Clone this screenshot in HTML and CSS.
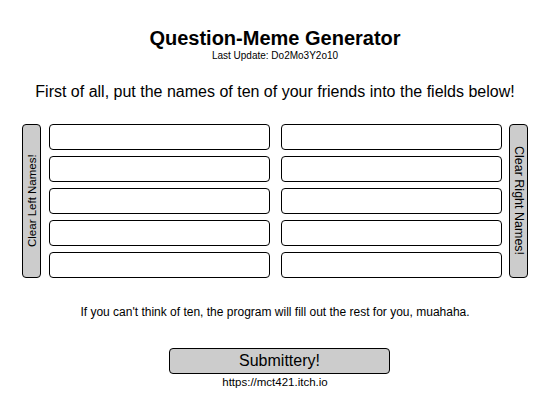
FILE: index.html
```html
<!DOCTYPE html>
<html lang="en">
  <head>
    <meta charset="UTF-8" />
    <meta name="viewport" content="width=device-width, initial-scale=1.0" />
    <title>Question-Meme Generator</title>
    <link rel="stylesheet" href="styles.css">
  </head>
  <body>
    <div class="page">
      <h1>Question-Meme Generator</h1>
      <div class="update">Last Update: Do2Mo3Y2o10</div>
      <p class="intro">First of all, put the names of ten of your friends into the fields below!</p>

      <div class="names">
        <button class="clear-btn clear-left" id="clear-left">Clear Left Names!</button>
        <div class="name-col" id="left-names">
          <input type="text" class="name" />
          <input type="text" class="name" />
          <input type="text" class="name" />
          <input type="text" class="name" />
          <input type="text" class="name" />
        </div>
        <div class="name-col" id="right-names">
          <input type="text" class="name" />
          <input type="text" class="name" />
          <input type="text" class="name" />
          <input type="text" class="name" />
          <input type="text" class="name" />
        </div>
        <button class="clear-btn clear-right" id="clear-right">Clear Right Names!</button>
      </div>

      <p class="hint">If you can't think of ten, the program will fill out the rest for you, muahaha.</p>

      <button class="submit-btn" id="submit-btn">Submittery!</button>
      <div class="link">https://mct421.itch.io</div>
    </div>
    <script>
      function clearNames(id) {
        document.querySelectorAll("#" + id + " input").forEach((input) => {
          input.value = "";
        });
      }

      document.getElementById("clear-left").addEventListener("click", () => clearNames("left-names"));
      document.getElementById("clear-right").addEventListener("click", () => clearNames("right-names"));
    </script>
  </body>
</html>
```

FILE: styles.css
```css
body {
  margin: 0;
  font-family: "Liberation Sans", Arial, sans-serif;
  color: #000;
  background: #fff;
}

.page {
  width: 550px;
  text-align: center;
  padding-top: 26px;
}

h1 {
  margin: 0;
  font-size: 20px;
  line-height: 24px;
  font-weight: bold;
}

.update {
  font-size: 10px;
  line-height: 11px;
}

.intro {
  margin: 21px 0 0;
  font-size: 16px;
  line-height: 19px;
}

.names {
  display: flex;
  justify-content: center;
  margin-top: 23px;
}

.name-col {
  display: flex;
  flex-direction: column;
  gap: 6px;
}

#left-names {
  margin: 0 11px 0 8px;
}

#right-names {
  margin-right: 7px;
}

.name {
  box-sizing: border-box;
  width: 221px;
  height: 26px;
  margin: 0;
  border: 1px solid #000;
  border-radius: 4px;
  background: #fff;
  font-family: inherit;
  font-size: 14px;
  padding: 0 5px;
}

.clear-btn {
  box-sizing: border-box;
  width: 19px;
  height: 154px;
  padding: 0;
  border: 1px solid #000;
  border-radius: 4px;
  background: #cccccc;
  font-family: inherit;
  font-size: 12.5px;
  color: #000;
  writing-mode: vertical-rl;
  text-align: center;
  cursor: pointer;
}

.clear-left {
  transform: rotate(180deg);
  font-size: 11.5px;
}

.hint {
  margin: 27px 0 0;
  font-size: 12px;
  line-height: 14px;
}

.submit-btn {
  display: block;
  box-sizing: border-box;
  width: 221px;
  height: 26px;
  margin: 29px 0 0 169px;
  padding: 0;
  border: 1px solid #000;
  border-radius: 4px;
  background: #cccccc;
  font-family: inherit;
  font-size: 16px;
  color: #000;
  cursor: pointer;
}

.link {
  margin-top: 2px;
  font-size: 11.5px;
  line-height: 13px;
}
```
